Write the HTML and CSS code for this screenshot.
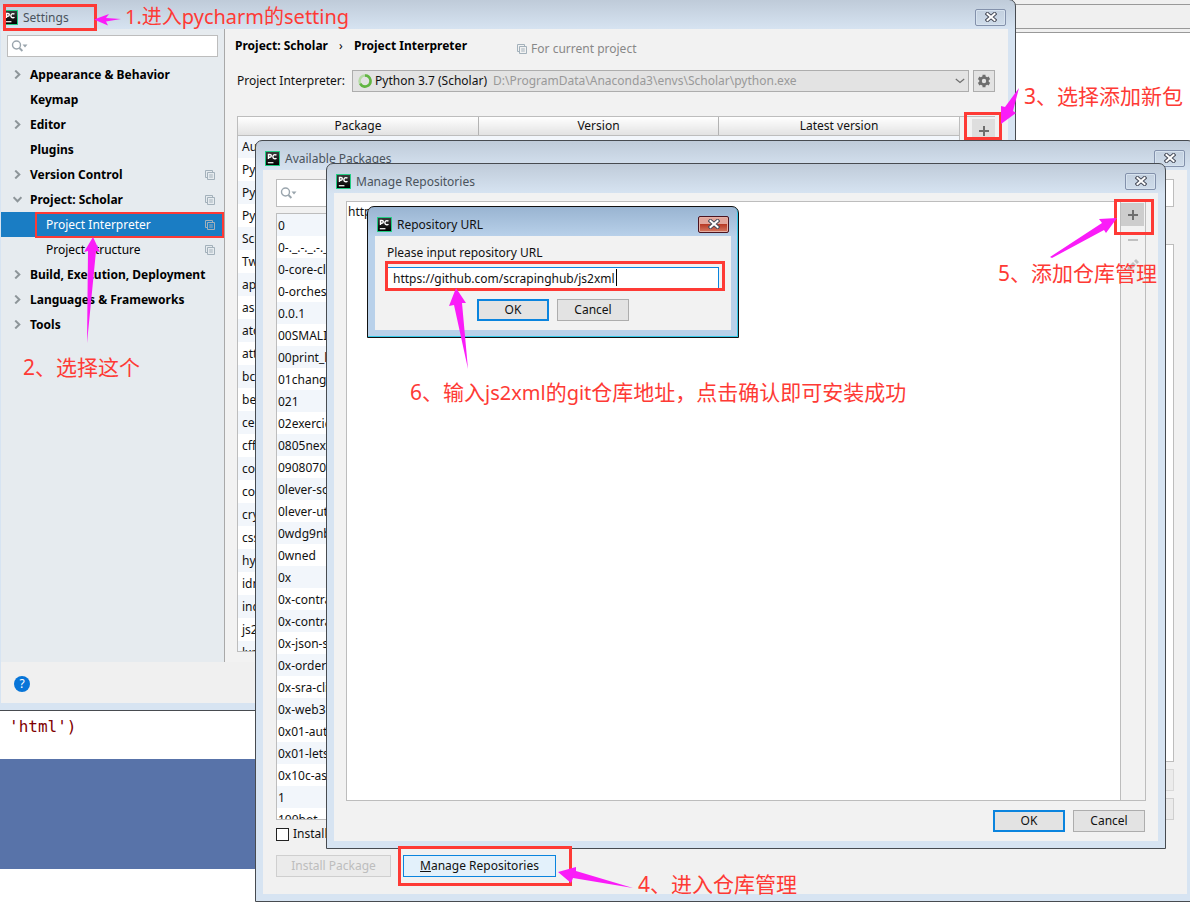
FILE: index.html
```html
<!DOCTYPE html>
<html lang="en">
<head>
<meta charset="utf-8">
<title>Settings</title>
<link rel="stylesheet" href="styles.css">
</head>
<body>
<svg width="0" height="0" class="defs" aria-hidden="true">
  <defs>
    <linearGradient id="pc-bg" x1="0" y1="0" x2="0" y2="1"><stop offset="0" stop-color="#3a3a3a"/><stop offset="1" stop-color="#000"/></linearGradient>
    <symbol id="pc" viewBox="0 0 16 16">
      <rect width="16" height="16" fill="#21d789"/>
      <rect x="1" y="1" width="14" height="14" fill="url(#pc-bg)"/>
      <path d="M3.700 8.500V3.700h1.600a1.400 1.400 0 0 1 0 2.900H3.700M12.200 4.600a2.200 2.200 0 1 0 0 3" fill="none" stroke="#fff" stroke-width="1.500"/>
      <path d="M3 12.500h6" stroke="#fff" stroke-width="1.300"/>
    </symbol>
    <symbol id="cross" viewBox="0 0 12 10">
      <path d="M2.500 2l7 6M9.500 2l-7 6" stroke="#484d5a" stroke-width="4" stroke-linecap="square"/>
      <path d="M2.500 2l7 6M9.500 2l-7 6" stroke="#fff" stroke-width="2" stroke-linecap="square"/>
    </symbol>
    <symbol id="search" viewBox="0 0 18 12">
      <circle cx="5.500" cy="5" r="4" fill="none" stroke="#9aa5ad" stroke-width="1.400"/>
      <path d="M8.400 8l3 3" stroke="#9aa5ad" stroke-width="1.800"/>
      <path d="M11.500 4.500h5l-2.500 3z" fill="#9aa5ad"/>
    </symbol>
    <symbol id="copy" viewBox="0 0 10 10">
      <path d="M7.500 2V.5h-7v7H2M2.500 2.500h7v7h-7zM4.200 5h3.600M4.200 7h3.600" fill="none" stroke="#a3b1bb" stroke-width="1"/>
    </symbol>
    <symbol id="chev" viewBox="0 0 8 8"><path d="M2 .5L5.600 4 2 7.500" fill="none" stroke="#8d9599" stroke-width="1.800"/></symbol>
    <symbol id="chev-down" viewBox="0 0 8 8"><path d="M.5 2L4 5.600 7.500 2" fill="none" stroke="#8d9599" stroke-width="1.800"/></symbol>
    <symbol id="plus" viewBox="0 0 12 12"><path d="M6 1v10M1 6h10" stroke="#6e6e6e" stroke-width="2"/></symbol>
  </defs>
</svg>

<main class="desktop">
  <div class="editor-top"><div class="strip"></div></div>
  <div class="console"><code>'html')</code></div>

  <section class="window win-settings" aria-label="Settings">
    <header class="titlebar"><svg class="pc"><use href="#pc"/></svg><span>Settings</span><button class="close" aria-label="Close Settings"><svg><use href="#cross"/></svg></button></header>
    <div class="settings-body">
      <aside class="sidebar">
        <div class="search"><svg><use href="#search"/></svg><input type="text" aria-label="Search settings"></div>
        <ul class="tree">
          <li><svg class="chev"><use href="#chev"/></svg><b>Appearance &amp; Behavior</b></li>
          <li><b>Keymap</b></li>
          <li><svg class="chev"><use href="#chev"/></svg><b>Editor</b></li>
          <li><b>Plugins</b></li>
          <li><svg class="chev"><use href="#chev"/></svg><b>Version Control</b><svg class="copy"><use href="#copy"/></svg></li>
          <li><svg class="chev"><use href="#chev-down"/></svg><b>Project: Scholar</b><svg class="copy"><use href="#copy"/></svg></li>
          <li class="child selected"><span>Project Interpreter</span><svg class="copy"><use href="#copy"/></svg></li>
          <li class="child"><span>Project Structure</span><svg class="copy"><use href="#copy"/></svg></li>
          <li><svg class="chev"><use href="#chev"/></svg><b>Build, Execution, Deployment</b></li>
          <li><svg class="chev"><use href="#chev"/></svg><b>Languages &amp; Frameworks</b></li>
          <li><svg class="chev"><use href="#chev"/></svg><b>Tools</b></li>
        </ul>
      </aside>
      <div class="page">
        <div class="crumbs"><b>Project: Scholar</b><span class="sep">›</span><b>Project Interpreter</b><span class="scope"><svg class="copy"><use href="#copy"/></svg>For current project</span></div>
        <div class="interp">
          <label for="interp">Project Interpreter:</label>
          <div class="combo">
            <select id="interp"><option>Python 3.7 (Scholar)</option></select>
            <svg class="ring" viewBox="0 0 14 14"><circle cx="7" cy="7" r="5.500" fill="none" stroke="#b5dba5" stroke-width="2.500"/><path d="M7 1.500a5.500 5.500 0 1 1-4.800 8.200" fill="none" stroke="#62b543" stroke-width="2.500"/></svg>
            <span class="path">D:\ProgramData\Anaconda3\envs\Scholar\python.exe</span>
            <svg class="arrow" viewBox="0 0 10 6"><path d="M.800 1L5 4.500 9.200 1" fill="none" stroke="#6e6e6e" stroke-width="1.200"/></svg>
          </div>
          <button class="gear" aria-label="Interpreter options"><svg viewBox="0 0 14 14"><path d="M7 .8v12.400M1.600 3.900l10.800 6.200M12.400 3.900L1.600 10.100" stroke="#6e6e6e" stroke-width="3"/><circle cx="7" cy="7" r="3.500" fill="#e3e3e3" stroke="#6e6e6e" stroke-width="2.600"/></svg></button>
        </div>
        <div class="packages">
          <div class="table-box">
            <table>
              <thead><tr><th>Package</th><th>Version</th><th>Latest version</th></tr></thead>
              <tbody>
                <tr><td colspan="3">Automat</td></tr><tr><td colspan="3">PyDispatcher</td></tr><tr><td colspan="3">PyHamcrest</td></tr><tr><td colspan="3">PyYAML</td></tr><tr><td colspan="3">Scrapy</td></tr><tr><td colspan="3">Twisted</td></tr><tr><td colspan="3">appdirs</td></tr><tr><td colspan="3">asn1crypto</td></tr><tr><td colspan="3">atomicwrites</td></tr><tr><td colspan="3">attrs</td></tr><tr><td colspan="3">bcrypt</td></tr><tr><td colspan="3">beautifulsoup4</td></tr><tr><td colspan="3">certifi</td></tr><tr><td colspan="3">cffi</td></tr><tr><td colspan="3">colorama</td></tr><tr><td colspan="3">constantly</td></tr><tr><td colspan="3">cryptography</td></tr><tr><td colspan="3">cssselect</td></tr><tr><td colspan="3">hyperlink</td></tr><tr><td colspan="3">idna</td></tr><tr><td colspan="3">incremental</td></tr><tr><td colspan="3">js2xml</td></tr><tr><td colspan="3">lxml</td></tr>
              </tbody>
            </table>
          </div>
          <div class="tools"><button aria-label="Install package"><svg><use href="#plus"/></svg></button></div>
        </div>
      </div>
    </div>
    <footer class="helpbar"><button class="help" aria-label="Help">?</button></footer>
  </section>

  <section class="window win-available" aria-label="Available Packages">
    <header class="titlebar"><svg class="pc"><use href="#pc"/></svg><span>Available Packages</span><button class="close" aria-label="Close Available Packages"><svg><use href="#cross"/></svg></button></header>
    <div class="available-body">
      <div class="search tall"><svg><use href="#search"/></svg><input type="text" aria-label="Search packages"></div>
      <div class="split">
        <ul class="list">
          <li>0</li><li>0-._.-._.-._.-._</li><li>0-core-client</li><li>0-orchestrator</li><li>0.0.1</li><li>00SMALINUX</li><li>00print_lol</li><li>01changer</li><li>021</li><li>02exercicio</li><li>0805nexter</li><li>090807040506</li><li>0lever-so</li><li>0lever-utils</li><li>0wdg9nbmpm</li><li>0wned</li><li>0x</li><li>0x-contract</li><li>0x-contracts</li><li>0x-json-schemas</li><li>0x-order-utils</li><li>0x-sra-client</li><li>0x-web3</li><li>0x01-autocert</li><li>0x01-letsencrypt</li><li>0x10c-asm</li><li>1</li><li>100bot</li>
        </ul>
        <div class="details"><div class="desc"></div><select aria-label="Package version" disabled></select><input type="text" aria-label="Package options" disabled></div>
      </div>
      <label class="check"><input type="checkbox">Install to user</label>
      <div class="row"><button class="btn install" disabled>Install Package</button><button class="btn manage"><u>M</u>anage Repositories</button></div>
    </div>
  </section>

  <section class="window win-manage" aria-label="Manage Repositories">
    <header class="titlebar"><svg class="pc"><use href="#pc"/></svg><span>Manage Repositories</span><button class="close" aria-label="Close Manage Repositories"><svg><use href="#cross"/></svg></button></header>
    <div class="manage-body">
      <div class="repos">
        <div class="repo-list">https://pypi.org/simple</div>
        <div class="tools">
          <button class="hover" aria-label="Add"><svg><use href="#plus"/></svg></button>
          <button aria-label="Remove"><svg viewBox="0 0 12 12"><path d="M1 6h10" stroke="#c0c0c0" stroke-width="2"/></svg></button>
          <button aria-label="Edit"><svg viewBox="0 0 12 12"><path d="M0 12l1-4 5-5 3 3-5 5zM7 2l2-2 3 3-2 2z" fill="#c0c0c0"/></svg></button>
        </div>
      </div>
      <div class="actions"><button class="btn primary">OK</button><button class="btn">Cancel</button></div>
    </div>
  </section>

  <section class="window win-url" role="dialog" aria-label="Repository URL">
    <header class="titlebar"><svg class="pc"><use href="#pc"/></svg><span>Repository URL</span><button class="close" aria-label="Close Repository URL"><svg><use href="#cross"/></svg></button></header>
    <div class="url-body">
      <label for="url">Please input repository URL</label>
      <div class="field"><input id="url" type="text" value="https://github.com/scrapinghub/js2xml"><i class="caret"></i></div>
      <div class="actions center"><button class="btn primary">OK</button><button class="btn">Cancel</button></div>
    </div>
  </section>

  <div class="mark m1"></div><div class="mark m2"></div><div class="mark m3"></div><div class="mark m4"></div><div class="mark m5"></div><div class="mark m6"></div>

  <svg class="pointer p1" viewBox="94 13 28 14"><path d="M94 19.500L109 14l-3 4 15 1-15 2.500 2 4z"/></svg>
  <svg class="pointer p2" viewBox="83 237 20 106"><path d="M93 237l-9 15 4-1-1 92 9-92 4 1z"/></svg>
  <svg class="pointer p3" viewBox="1000 88 20 38"><path d="M1001 124v-18l4 1 14-19-6 23 3 2z"/></svg>
  <svg class="pointer p4" viewBox="558 866 76 24"><path d="M558 872l18-5v4l57 17-60-10-2 5z"/></svg>
  <svg class="pointer p5" viewBox="1050 217 68 42"><path d="M1117 218l-18 1 3 4-52 34 2 1 52-28 2 3z"/></svg>
  <svg class="pointer p6" viewBox="448 288 22 82"><path d="M456 288l-7 18 5-1 14 64-6-66h4z"/></svg>

  <p class="note n1">1.进入pycharm的setting</p>
  <p class="note n2">2、选择这个</p>
  <p class="note n3">3、选择添加新包</p>
  <p class="note n4">4、进入仓库管理</p>
  <p class="note n5">5、添加仓库管理</p>
  <p class="note n6">6、输入<span class="latin">js2xml</span>的<span class="latin">git</span>仓库地址，点击确认即可安装成功</p>
</main>
</body>
</html>
```
FILE: styles.css
```css
* { box-sizing: border-box; }
body { margin: 0; font: 12px/16px "Noto Sans", "Noto Sans CJK SC", sans-serif; color: #111; }
button, input, select { font: inherit; color: inherit; margin: 0; padding: 0; border: 0; border-radius: 0; }
ul { list-style: none; margin: 0; padding: 0; }
p { margin: 0; }
svg { display: block; flex: none; }
.defs { position: absolute; }

.desktop { position: relative; height: 100vh; min-height: 700px; overflow: hidden; background: #fff; display: flex; flex-direction: column; justify-content: space-between; }
.editor-top { height: 33px; padding-top: 4px; background: #f0f0f0; border-bottom: 1px solid #999; }
.strip { height: 25px; border-top: 1px solid #999; border-bottom: 1px solid #999; }
.console { height: 193px; padding: 4px 0 35px; display: flex; flex-direction: column; gap: 20px; }
.console::after { content: ""; flex: 1; background: #5873a9; }
.console code { padding-left: 9px; font: 16px/24px "DejaVu Sans Mono", monospace; color: #800000; }

/* windows */
.window { position: absolute; display: flex; flex-direction: column; padding: 0 7px 7px; border: 1px solid #474b50; border-radius: 7px 7px 0 0; background: linear-gradient(#bfcbd9, #d7e4f2 30px); }
.win-settings { left: -7px; right: 174px; top: -1px; bottom: 193px; }
.win-available { left: 255px; right: -5px; top: 140px; bottom: 2px; }
.win-manage { left: 326px; right: 24px; top: 163px; bottom: 55px; }
.win-url { left: 367px; top: 206px; width: 372px; border-color: #111; background: linear-gradient(#99b4d1, #b9d1ea 30px); box-shadow: inset -1px -1px #35c9e8; }
.titlebar { flex: none; height: 29px; padding: 6px 2px 0; display: flex; align-items: center; gap: 5px; color: #4a535c; }
.win-url .titlebar { color: #111; }
.pc { width: 15px; height: 15px; }
.close { margin: 0 0 1px auto; width: 31px; height: 17px; display: grid; place-items: center; border: 1px solid #8391ab; border-radius: 2px; background: linear-gradient(#c3d0df, #cfdcea); box-shadow: inset 0 0 0 1px #d7e3ef; }
.close svg { width: 12px; height: 10px; }
.win-url .close { border-color: #4b1420; background: linear-gradient(#e2a59b 50%, #b83b26 50%, #d57a63); box-shadow: inset 0 0 0 1px #e5b0a5; }

/* controls */
.search { display: flex; align-items: center; gap: 2px; height: 22px; padding-left: 3px; border: 1px solid #bdbdbd; background: #fff; }
.search svg { width: 18px; height: 12px; }
.search input { flex: 1; min-width: 0; background: none; }
.search.tall { height: 28px; flex: none; }
.btn { height: 22px; min-width: 72px; border: 1px solid #adadad; background: #e3e3e3; }
.btn.primary { border: 2px solid #0a84de; }
.btn:disabled { color: #bdbdbd; border-color: #cfcfcf; background: #ebebeb; }
.tools button { width: 23px; height: 23px; display: grid; place-items: center; background: none; }
.tools svg { width: 12px; height: 12px; }

/* settings */
.settings-body { flex: 1; min-height: 0; display: flex; }
.sidebar { flex: none; width: 224px; padding-top: 6px; border-right: 1px solid #a9a9a9; background: #e6ebef; }
.sidebar .search { margin: 0 6px 5px; }
.tree li { position: relative; height: 25px; padding: 0 9px 0 29px; display: flex; align-items: center; color: #000; }
.tree .child { padding-left: 45px; }
.tree .selected { background: #1a7dc4; color: #fff; }
.tree .chev { position: absolute; left: 12px; width: 9px; height: 9px; }
.copy { width: 10px; height: 10px; }
.tree .copy { margin-left: auto; }
.page { flex: 1; min-width: 0; padding: 7px 13px 10px 12px; display: flex; flex-direction: column; background: #f2f2f2; }
.crumbs { height: 20px; display: flex; align-items: center; color: #000; }
.crumbs b:first-child { margin-left: -2px; }
.sep { width: 26px; text-align: center; }
.scope { display: flex; align-items: center; gap: 4px; margin: 5px 0 0 50px; color: #888; }
.interp { height: 22px; margin-top: 14px; display: flex; align-items: center; gap: 4px; }
.interp label { width: 111px; white-space: nowrap; }
.combo { flex: 1; display: grid; align-items: center; height: 22px; }
.combo > * { grid-area: 1 / 1; }
.combo select { appearance: none; width: 100%; height: 22px; padding-left: 22px; border: 1px solid #adadad; background: #e3e3e3; }
.ring { width: 14px; height: 14px; margin-left: 6px; }
.path { margin-left: 141px; color: #999; pointer-events: none; }
.arrow { width: 10px; height: 6px; justify-self: end; margin-right: 4px; }
.gear { width: 22px; height: 22px; display: grid; place-items: center; border: 1px solid #adadad; background: #e3e3e3; }
.gear svg { width: 14px; height: 14px; }
.packages { flex: 1; min-height: 0; margin-top: 24px; display: flex; }
.table-box { flex: 1; overflow: hidden; border: 1px solid #bdbdbd; background: #fff; }
table { width: 100%; border-collapse: collapse; table-layout: fixed; }
th { height: 18px; padding: 0; font-weight: 400; background: linear-gradient(#fff, #e2e2e2); border-right: 1px solid #b3b3b3; border-bottom: 1px solid #bdbdbd; }
th:last-child { border-right: 0; }
td { height: 23px; padding: 0 0 0 4px; }
tbody tr:nth-child(odd), .list li:nth-child(odd) { background: #f2f6fb; }
.packages .tools { flex: none; width: 35px; padding: 2px 0 0 12px; border-top: 1px solid #bdbdbd; }
.packages .tools button { background: #dedede; }
.helpbar { height: 41px; padding: 14px 13px; background: #f0f0f0; }
.help { display: block; width: 16px; height: 16px; line-height: 16px; border-radius: 50%; background: #0875d8; color: #fff; }

/* available packages */
.available-body { flex: 1; min-height: 0; padding: 9px 13px 17px; display: flex; flex-direction: column; background: #f1f1f1; }
.split { flex: 1; min-height: 0; margin-top: 6px; display: flex; gap: 8px; }
.list { flex: 1; overflow: hidden; border: 1px solid #bdbdbd; background: #fff; }
.list li { height: 22px; padding: 4px 1px 2px; white-space: nowrap; }
.details { flex: 1; padding-top: 31px; display: flex; flex-direction: column; gap: 7px; }
.desc { flex: 1; border: 1px solid #bdbdbd; background: #fff; }
.details select, .details input { appearance: none; height: 22px; border: 1px solid #cfcfcf; background: #ebebeb; }
.check { height: 16px; margin: 6px 0 13px; display: flex; align-items: center; gap: 4px; }
.check input { appearance: none; width: 13px; height: 13px; border: 1px solid #222; background: #fff; }
.row { display: flex; gap: 12px; }
.install { width: 115px; }
.manage { width: 153px; border-color: #0a84de; background: #e3f1fb; }

/* manage repositories */
.manage-body { flex: 1; min-height: 0; padding: 8px 12px 9px; display: flex; flex-direction: column; background: #f2f2f2; }
.repos { flex: 1; display: flex; border: 1px solid #bdbdbd; }
.repo-list { flex: 1; padding: 2px 1px; border-right: 1px solid #bdbdbd; background: #fff; }
.repos .tools { width: 24px; padding-top: 1px; display: grid; align-content: start; gap: 2px; }
.repos .hover { background: #cdcdcd; }
.actions { margin-top: 9px; padding-right: 1px; display: flex; justify-content: flex-end; gap: 8px; }

/* repository url */
.url-body { padding: 8px 12px 9px; background: #f2f2f2; }
.url-body label { display: block; line-height: 18px; }
.field { position: relative; margin: 5px 0 10px; }
.field input { display: block; width: 100%; height: 22px; padding: 0 5px; border: 1px solid #0a84de; background: #fff; }
.caret { position: absolute; left: 229px; top: 2px; width: 1px; height: 17px; background: #000; }
.actions.center { padding-right: 0; justify-content: center; }

/* annotations */
.mark { position: absolute; border: 3px solid #fe3a35; }
.m1 { left: 3px; top: 4px; width: 94px; height: 27px; }
.m2 { left: 35px; top: 212px; width: 189px; height: 26px; border-width: 2px; }
.m3 { right: 188px; top: 112px; width: 38px; height: 28px; }
.m4 { left: 398px; bottom: 18px; width: 174px; height: 40px; }
.m5 { right: 36px; top: 199px; width: 40px; height: 36px; }
.m6 { left: 385px; top: 261px; width: 340px; height: 30px; }
.pointer { position: absolute; fill: #fa1cf8; }
.p1 { left: 94px; top: 13px; width: 28px; height: 14px; }
.p2 { left: 83px; top: 237px; width: 20px; height: 106px; }
.p3 { right: 170px; top: 88px; width: 20px; height: 38px; }
.p4 { left: 558px; bottom: 14px; width: 76px; height: 24px; }
.p5 { right: 72px; top: 217px; width: 68px; height: 42px; }
.p6 { left: 448px; top: 288px; width: 22px; height: 82px; }
.note { position: absolute; font-size: 21px; line-height: 28px; white-space: nowrap; color: #fe3a35; }
.note.n1, .latin { font-size: 20px; }
.n1 { left: 125px; top: 3px; }
.n2 { left: 23px; top: 353px; }
.n3 { right: 7px; top: 82px; }
.n4 { left: 638px; bottom: 6px; }
.n5 { right: 33px; top: 259px; }
.n6 { left: 410px; top: 378px; }
```
